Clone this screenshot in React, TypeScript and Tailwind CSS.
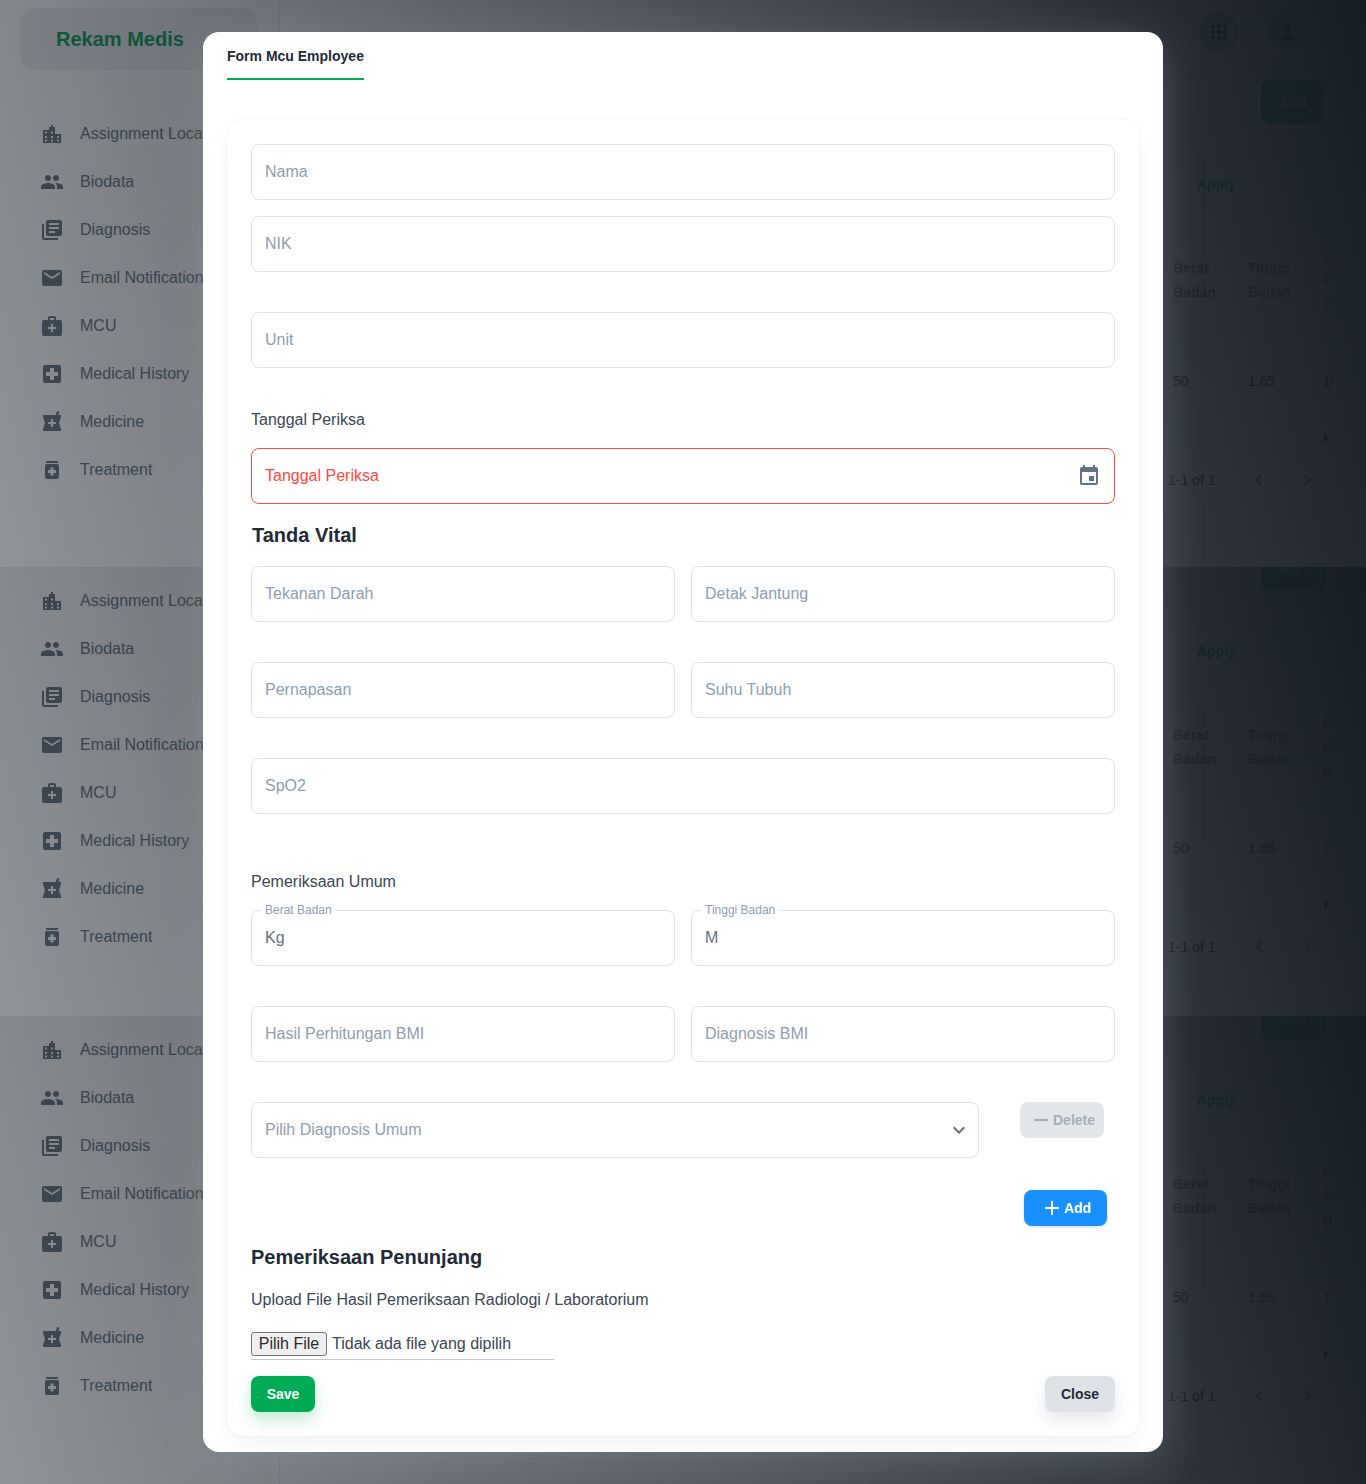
import React from 'react';
import {
    MdAdd,
    MdApps,
    MdArrowRight,
    MdChevronLeft,
    MdChevronRight,
    MdEmail,
    MdEvent,
    MdExpandMore,
    MdLibraryBooks,
    MdLocalHospital,
    MdLocalPharmacy,
    MdMedicalServices,
    MdMedication,
    MdPeople,
    MdRemove,
} from 'react-icons/md';

const BuildingIcon = ({ className = '' }: { className?: string }) => (
    <svg viewBox="0 0 24 24" fill="currentColor" className={className}>
        <path
            fillRule="evenodd"
            d="M3 8h6V5h2V3h2v2h2v7h6v9H3zM5 9.500v2h2v-2zM11 9.500v2h2v-2zM5 14v2h2v-2zM11 14v2h2v-2zM17 14v2h2v-2zM5 17.500v2h2v-2zM11 17.500v2h2v-2zM17 17.500v2h2v-2z"
        />
    </svg>
);

const AvatarIcon = ({ className = '' }: { className?: string }) => (
    <svg viewBox="0 0 24 24" fill="currentColor" className={className}>
        <circle cx="12" cy="8" r="3.500" />
        <path d="M6 20v-2.500c0-2.500 3-4 6-4s6 1.500 6 4V20z" />
    </svg>
);

const menu = [
    { label: 'Assignment Location', icon: BuildingIcon },
    { label: 'Biodata', icon: MdPeople },
    { label: 'Diagnosis', icon: MdLibraryBooks },
    { label: 'Email Notification', icon: MdEmail },
    { label: 'MCU', icon: MdMedicalServices },
    { label: 'Medical History', icon: MdLocalHospital },
    { label: 'Medicine', icon: MdLocalPharmacy },
    { label: 'Treatment', icon: MdMedication },
];

// the page that sits behind the modal
const BackgroundPage = () => (
    <div className="flex h-[567px] w-full">
        <aside className="w-[280px] shrink-0 border-r border-[#e6e9ec] pt-2">
            <div className="ml-5 flex h-[62px] w-[238px] items-center rounded-2xl bg-[rgba(145,158,171,0.12)] pl-9">
                <span className="text-xl font-bold text-[#00a050]">Rekam Medis</span>
            </div>
            <nav className="mt-[40px] flex flex-col">
                {menu.map(({ label, icon: Icon }) => (
                    <div key={label} className="flex h-12 items-center pl-10 text-[#637381]">
                        <Icon className="h-6 w-6 shrink-0" />
                        <span className="ml-4 whitespace-nowrap text-base">{label}</span>
                    </div>
                ))}
            </nav>
        </aside>
        <main className="flex min-w-0 flex-1 justify-end">
            <div className="w-[198px] text-[#637381]">
                <div className="mt-3 flex h-10 items-center pl-[31px]">
                    <div className="flex h-10 w-10 items-center justify-center rounded-full bg-[#c4c8cc] text-[#212b36]">
                        <MdApps className="h-6 w-6" />
                    </div>
                    <div className="ml-7 flex h-10 w-10 items-center justify-center rounded-full bg-[#c4c8cc] text-[#212b36]">
                        <AvatarIcon className="h-6 w-6" />
                    </div>
                </div>
                <div className="mt-7 ml-[93px] flex h-11 w-16 items-center justify-center rounded-lg bg-[#00ab55] text-sm font-bold text-white">
                    Add
                </div>
                <div className="mt-[32px] flex h-14 items-center">
                    <div className="h-14 w-[7px] rounded-r-lg border border-l-0 border-[#dfe3e8]" />
                    <span className="ml-[22px] text-sm font-bold leading-[22px] text-[#00ab55]">Apply</span>
                </div>
                <div className="mt-[44px] flex pl-[5px] text-sm font-bold leading-6">
                    <div className="w-[75px]">Berat<br />Badan</div>
                    <div className="w-[75px]">Tinggi<br />Badan</div>
                    <div className="-mt-3 w-[9px] overflow-hidden">H<br />P<br />B</div>
                </div>
                <div className="mt-[54px] flex pl-[5px] text-sm leading-[22px] text-[#212b36]">
                    <div className="w-[75px]">50</div>
                    <div className="w-[75px]">1.65</div>
                    <div className="w-[9px] overflow-hidden">18</div>
                </div>
                <div className="mt-[34px] ml-[150px] h-6 text-[#212b36]">
                    <MdArrowRight className="-ml-1 h-6 w-6" />
                </div>
                <div className="mt-[18px] flex h-6 items-center text-sm text-[#212b36]">
                    <span className="w-[79px]">1-1 of 1</span>
                    <MdChevronLeft className="h-6 w-6 text-[#7f8c99]" />
                    <MdChevronRight className="ml-6 h-6 w-6 text-[#7f8c99]" />
                </div>
            </div>
        </main>
    </div>
);

const fieldClass =
    'h-14 w-full rounded-lg border border-[#dfe3e8] bg-white px-[13px] text-base text-[#212b36] outline-none placeholder:text-[#919eab]';

const Field = ({ placeholder }: { placeholder: string }) => <input className={fieldClass} placeholder={placeholder} />;

const NotchedField = ({ label, placeholder }: { label: string; placeholder: string }) => (
    <div className="relative h-14 w-full">
        <input className={`${fieldClass} placeholder:text-[#637381]`} placeholder={placeholder} />
        <label className="absolute -top-[8px] left-[10px] bg-white px-1 text-xs leading-4 text-[#919eab]">{label}</label>
    </div>
);

const FormMcu = () => (
    <div className="absolute left-[203px] top-8 h-[1420px] w-[960px] rounded-2xl bg-white px-6 shadow-[0_8px_40px_rgba(145,158,171,0.32)]">
        <div className="inline-flex h-12 items-center border-b-2 border-[#00ab55] pt-0.5 text-sm font-bold text-[#212b36]">
            Form Mcu Employee
        </div>
        <div className="mt-10 rounded-2xl bg-white p-6 shadow-[0_0_2px_rgba(145,158,171,0.2),0_12px_24px_-4px_rgba(145,158,171,0.12)]">
            <Field placeholder="Nama" />
            <div className="mt-4"><Field placeholder="NIK" /></div>
            <div className="mt-10"><Field placeholder="Unit" /></div>

            <div className="mt-10 text-base leading-6 text-[#3d4651]">Tanggal Periksa</div>
            <div className="mt-4 flex h-14 items-center rounded-lg border border-[#ff4842] pl-[13px] pr-[13px]">
                <input className="min-w-0 flex-1 text-base text-[#ff4842] outline-none placeholder:text-[#ff4842]" placeholder="Tanggal Periksa" />
                <MdEvent className="h-6 w-6 text-[#637381]" />
            </div>

            <h2 className="mt-4 ml-px text-xl font-bold leading-[30px] text-[#212b36]">Tanda Vital</h2>
            <div className="mt-4 grid grid-cols-2 gap-x-4">
                <Field placeholder="Tekanan Darah" />
                <Field placeholder="Detak Jantung" />
            </div>
            <div className="mt-10 grid grid-cols-2 gap-x-4">
                <Field placeholder="Pernapasan" />
                <Field placeholder="Suhu Tubuh" />
            </div>
            <div className="mt-10"><Field placeholder="SpO2" /></div>

            <div className="mt-14 text-base leading-6 text-[#3d4651]">Pemeriksaan Umum</div>
            <div className="mt-4 grid grid-cols-2 gap-x-4">
                <NotchedField label="Berat Badan" placeholder="Kg" />
                <NotchedField label="Tinggi Badan" placeholder="M" />
            </div>
            <div className="mt-10 grid grid-cols-2 gap-x-4">
                <Field placeholder="Hasil Perhitungan BMI" />
                <Field placeholder="Diagnosis BMI" />
            </div>

            <div className="mt-10 flex items-start">
                <div className="flex h-14 w-[728px] items-center justify-between rounded-lg border border-[#dfe3e8] pl-[13px] pr-[7px] text-base text-[#919eab]">
                    <span>Pilih Diagnosis Umum</span>
                    <MdExpandMore className="h-6 w-6 text-[#637381]" />
                </div>
                <button className="ml-[41px] flex h-9 w-[84px] items-center justify-center rounded-lg bg-[#e4e7ea] text-sm font-bold text-[#a6afb9]">
                    <MdRemove className="h-6 w-6" />
                    <span>Delete</span>
                </button>
            </div>

            <div className="mt-8 flex justify-end pr-2">
                <button className="flex h-9 w-[83px] items-center justify-center rounded-lg bg-[#1890ff] text-sm font-bold text-white shadow-[0_1px_3px_rgba(145,158,171,0.4)]">
                    <MdAdd className="h-6 w-6" />
                    <span>Add</span>
                </button>
            </div>

            <h2 className="mt-4 text-xl font-bold leading-[30px] text-[#212b36]">Pemeriksaan Penunjang</h2>
            <div className="mt-4 text-base leading-6 text-[#3d4651]">Upload File Hasil Pemeriksaan Radiologi / Laboratorium</div>

            <div className="mt-5 flex h-[28px] w-[303px] items-start border-b border-[#c4c6cc] text-base text-[#3d4651]">
                <button className="h-6 w-[76px] rounded-[3px] border border-[#767676] bg-[#efefef] text-base leading-5 text-[#2b2b2b]">Pilih File</button>
                <span className="ml-[5px] leading-6">Tidak ada file yang dipilih</span>
            </div>

            <div className="mt-4 flex justify-between">
                <button className="h-9 w-16 rounded-lg bg-[#00ab55] text-sm font-bold text-white shadow-[0_8px_16px_rgba(0,171,85,0.24)]">Save</button>
                <button className="h-9 w-[70px] rounded-lg bg-[#dfe3e8] text-sm font-bold text-[#212b36] shadow-[0_8px_16px_rgba(145,158,171,0.24)]">Close</button>
            </div>
        </div>
    </div>
);

const backdrop = 'absolute inset-0 bg-[linear-gradient(75deg,rgba(22,28,36,0.48)_0%,rgb(22,28,36)_100%)]';

export default function App() {
    return (
        <div className="relative h-[1484px] w-[1366px] overflow-hidden bg-white font-['Liberation_Sans',Arial,sans-serif]">
            <div className="relative h-[567px] overflow-hidden">
                <BackgroundPage />
                <div className={backdrop} />
            </div>
            <div className="relative h-[449px] overflow-hidden">
                <div className="-mt-[100px]"><BackgroundPage /></div>
                <div className={backdrop} />
            </div>
            <div className="relative h-[468px] overflow-hidden">
                <div className="-mt-[100px]"><BackgroundPage /></div>
                <div className={backdrop} />
            </div>
            <FormMcu />
        </div>
    );
}
